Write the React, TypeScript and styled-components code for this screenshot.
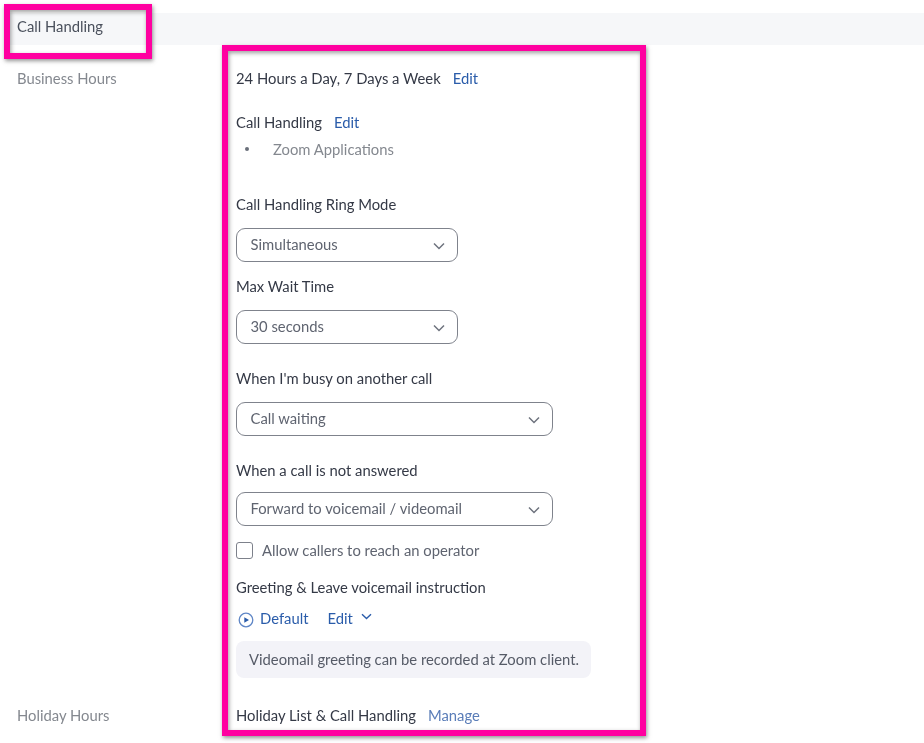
import React from 'react';
import styled, { createGlobalStyle } from 'styled-components';

const GlobalStyle = createGlobalStyle`
  html, body {
    margin: 0;
    padding: 0;
    background: #fff;
  }
  body {
    font-family: Lato, 'Open Sans', sans-serif;
    font-size: 14.8px;
    color: #3f4450;
  }
`;

const Page = styled.div`
  position: relative;
  width: 924px;
  height: 743px;
  overflow: hidden;
  background: #fff;
`;

const Content = styled.div`
  padding-top: 13px;
  filter: blur(0.5px);
`;

const SectionBar = styled.div`
  height: 32px;
  margin-left: 10px;
  padding-left: 7px;
  background: #f6f7f9;
  display: flex;
  align-items: center;
  color: #4a505c;
`;

const BarTitle = styled.span`
  position: relative;
  top: -3px;
`;

const Rows = styled.div`
  display: grid;
  grid-template-columns: 219px 420px;
  row-gap: 27px;
  padding-left: 17px;
  margin-top: 23px;
`;

const SideLabel = styled.div`
  color: #84888f;
  line-height: 20px;
`;

const Main = styled.div`
  display: flex;
  flex-direction: column;
`;

const Line = styled.div<{ $top?: number }>`
  display: flex;
  align-items: center;
  height: 20px;
  margin-top: ${p => p.$top ?? 0}px;
  white-space: nowrap;
  color: #343946;
`;

const EditLink = styled.a<{ $gap?: number; $soft?: boolean }>`
  color: ${p => (p.$soft ? '#5a7db8' : '#2a5caa')};
  margin-left: ${p => p.$gap ?? 12}px;
`;

const BulletRow = styled(Line)`
  color: #84888f;
  padding-left: 9px;
`;

const Bullet = styled.span`
  width: 4px;
  height: 4px;
  border-radius: 50%;
  background: #6a6f7a;
  margin-right: 24px;
`;

const Select = styled.div<{ $wide?: boolean; $top?: number }>`
  box-sizing: border-box;
  width: ${p => (p.$wide ? 317 : 222)}px;
  height: 34px;
  margin-top: ${p => p.$top ?? 14}px;
  padding: 0 12px 3px 13.5px;
  border: 1.5px solid #7f838c;
  border-radius: 9px;
  display: flex;
  align-items: center;
  justify-content: space-between;
  color: #5f6470;
  background: #fff;
`;

const Chevron = styled.svg`
  width: 12px;
  height: 8px;
  margin-top: 5px;
  fill: none;
  stroke: #6e737e;
  stroke-width: 1.5;
`;

const CheckRow = styled(Line)`
  color: #5f6470;
`;

const CheckBox = styled.span`
  box-sizing: border-box;
  width: 17px;
  height: 17px;
  margin-right: 9px;
  border: 1.5px solid #7d818b;
  border-radius: 3px;
`;

const PlayIcon = styled.svg`
  width: 16px;
  height: 16px;
  margin: 3px 6px 0 2px;
`;

const BlueText = styled.span`
  color: #2a5caa;
`;

const SmallChevron = styled.svg`
  width: 11px;
  height: 7px;
  margin: 0 0 3px 8px;
  fill: none;
  stroke: #2a5caa;
  stroke-width: 1.4;
`;

const Notice = styled.div`
  box-sizing: border-box;
  width: 355px;
  height: 37px;
  margin-top: 12.5px;
  padding-left: 13px;
  display: flex;
  align-items: center;
  white-space: nowrap;
  border-radius: 8px;
  background: #f3f3f8;
  color: #565b67;
`;

const Highlight = styled.div<{ $x: number; $y: number; $w: number; $h: number }>`
  position: absolute;
  box-sizing: border-box;
  left: ${p => p.$x}px;
  top: ${p => p.$y}px;
  width: ${p => p.$w}px;
  height: ${p => p.$h}px;
  border: 6.5px solid #ff00a0;
  box-shadow: 1px 2px 4px rgba(60, 60, 60, 0.55), inset 1px 2px 4px rgba(60, 60, 60, 0.5);
`;

const DownChevron = () => (
  <Chevron viewBox="0 0 12 8">
    <path d="M1 1.5 L6 6.5 L11 1.5" />
  </Chevron>
);

export default function App() {
  return (
    <Page>
      <GlobalStyle />
      <Content>
        <SectionBar>
          <BarTitle>Call Handling</BarTitle>
        </SectionBar>
        <Rows>
          <SideLabel>Business Hours</SideLabel>
          <Main>
            <Line>
              24 Hours a Day, 7 Days a Week
              <EditLink $gap={12}>Edit</EditLink>
            </Line>
            <Line $top={24}>
              Call Handling
              <EditLink $gap={12}>Edit</EditLink>
            </Line>
            <BulletRow $top={7}>
              <Bullet />
              Zoom Applications
            </BulletRow>
            <Line $top={35}>Call Handling Ring Mode</Line>
            <Select $top={14}>
              Simultaneous
              <DownChevron />
            </Select>
            <Line $top={14}>Max Wait Time</Line>
            <Select $top={14}>
              30 seconds
              <DownChevron />
            </Select>
            <Line $top={24}>When I'm busy on another call</Line>
            <Select $wide $top={14}>
              Call waiting
              <DownChevron />
            </Select>
            <Line $top={24}>When a call is not answered</Line>
            <Select $wide $top={12}>
              Forward to voicemail / videomail
              <DownChevron />
            </Select>
            <CheckRow $top={14}>
              <CheckBox />
              Allow callers to reach an operator
            </CheckRow>
            <Line $top={17}>Greeting &amp; Leave voicemail instruction</Line>
            <Line $top={11}>
              <PlayIcon viewBox="0 0 16 16">
                <circle cx="8" cy="8" r="6.8" fill="none" stroke="#5f86c6" strokeWidth="1.3" />
                <path d="M6.3 5.2 L11 8 L6.3 10.8 Z" fill="#2a5caa" />
              </PlayIcon>
              <BlueText>Default</BlueText>
              <EditLink $gap={19}>Edit</EditLink>
              <SmallChevron viewBox="0 0 11 7">
                <path d="M1 1.2 L5.5 5.5 L10 1.2" />
              </SmallChevron>
            </Line>
            <Notice>Videomail greeting can be recorded at Zoom client.</Notice>
          </Main>
          <SideLabel>Holiday Hours</SideLabel>
          <Line>
            Holiday List &amp; Call Handling
            <EditLink $gap={12} $soft>Manage</EditLink>
          </Line>
        </Rows>
      </Content>
      <Highlight $x={4} $y={4} $w={148} $h={55} />
      <Highlight $x={222} $y={45} $w={424} $h={691} />
    </Page>
  );
}
